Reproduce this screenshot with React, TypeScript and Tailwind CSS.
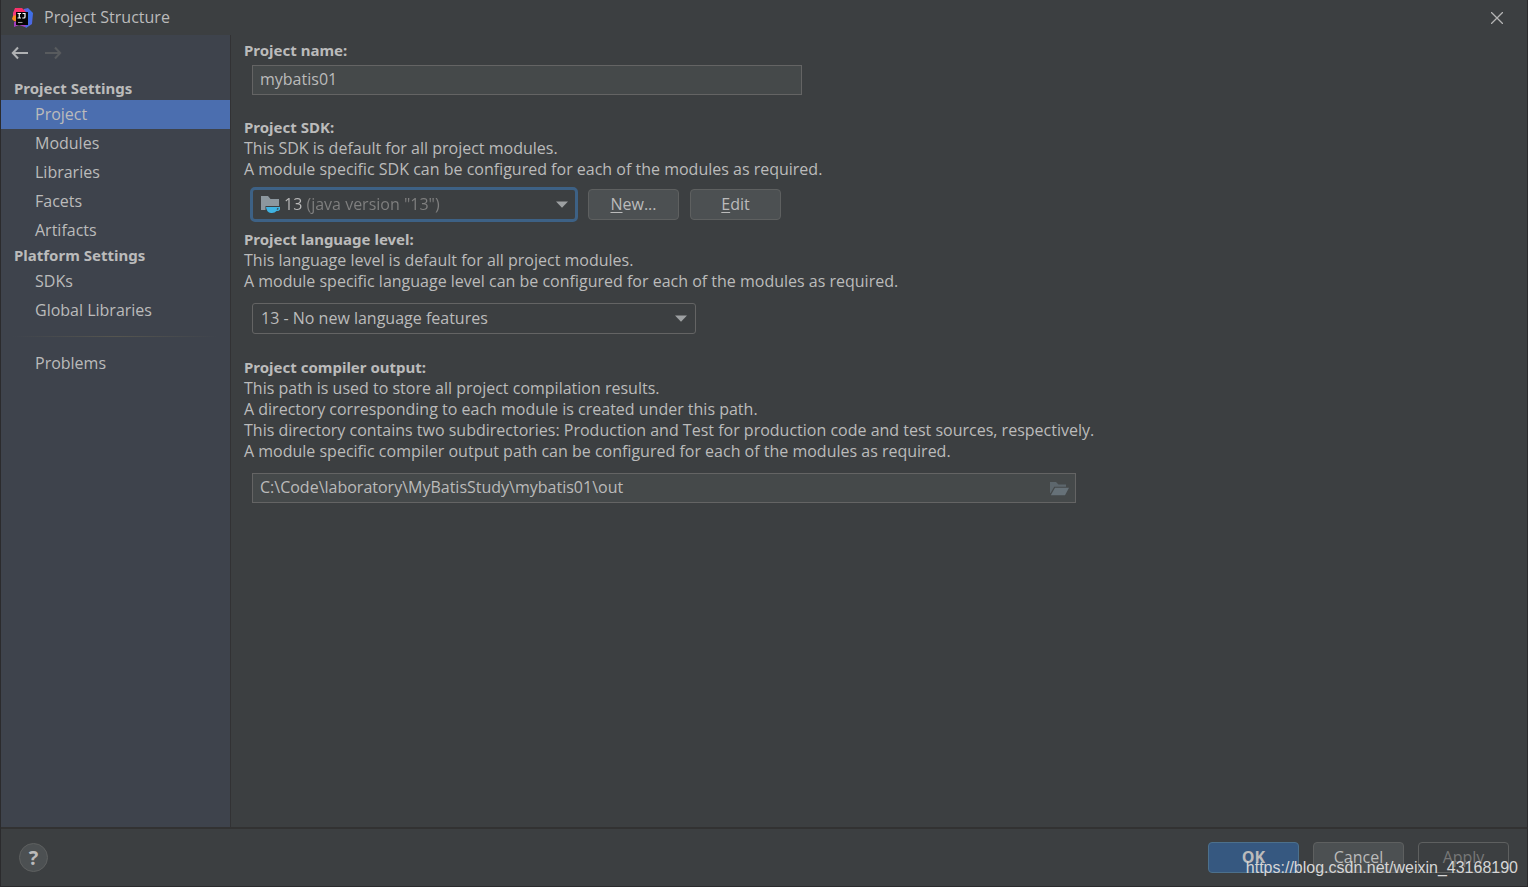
import { useState } from 'react';
import type { ReactNode } from 'react';

const projectItems = ['Project', 'Modules', 'Libraries', 'Facets', 'Artifacts'];
const platformItems = ['SDKs', 'Global Libraries'];

function AppLogo() {
  return (
    <svg width="22" height="22" viewBox="0 0 22 22" aria-hidden="true">
      <defs>
        <linearGradient id="logoBlue" x1="0" y1="0" x2="1" y2="1">
          <stop offset="0" stopColor="#7a5be0" />
          <stop offset="0.5" stopColor="#3a72e8" />
          <stop offset="1" stopColor="#5a62e0" />
        </linearGradient>
        <linearGradient id="logoRed" x1="0" y1="1" x2="1" y2="0">
          <stop offset="0" stopColor="#f0408a" />
          <stop offset="1" stopColor="#fe2857" />
        </linearGradient>
      </defs>
      <path d="M13 2 L17 1 L22 6 L21 17 L15 21 L10 14 Z" fill="url(#logoBlue)" />
      <path d="M4 1 L11 1 L15 5 L9 12 L2 12 L2 6 Z" fill="url(#logoRed)" />
      <path d="M2 9 L5 8 L6 15 L3 14 L1 12 Z" fill="#f98b1e" />
      <path d="M3 15 L6 14 L15 18 L14 20 L8 18 L3 20 Z" fill="#a63fc0" />
      <rect x="5" y="5" width="12" height="13" fill="#050505" />
      <path d="M6.5 6.5 H10 M8.25 6.5 V11 M6.5 11 H10 M11.5 6.5 H14 V10 Q14 11 13 11 H11.3" stroke="#fff" strokeWidth="1.2" fill="none" />
      <path d="M7 15.5 H11.5" stroke="#999" strokeWidth="1.1" />
    </svg>
  );
}

function Arrow({ flip = false }: { flip?: boolean }) {
  return (
    <svg width="18" height="14" viewBox="0 0 18 14" className={flip ? 'rotate-180' : ''} aria-hidden="true">
      <path d="M17 7 H2 M7 1.5 L1.8 7 L7 12.5" fill="none" stroke="currentColor" strokeWidth="2" />
    </svg>
  );
}

function SdkIcon() {
  return (
    <svg width="20" height="19" viewBox="0 0 20 19" aria-hidden="true">
      <path d="M0 1 H7 L9.5 4 H18 V11 H4.5 V15 H0 Z" fill="#8c979e" />
      <path d="M5 12 H19 V14.5 Q18.5 16 15.5 16 Q14 18 11 18 H10 Q5.5 17.5 5 12 Z" fill="#3fb3e2" />
      <path d="M16 13.3 H17.7 Q17.5 14.8 15.8 14.8 Z" fill="#3c3f41" />
    </svg>
  );
}

function FolderIcon() {
  return (
    <svg width="19" height="15" viewBox="0 0 19 15" aria-hidden="true">
      <path d="M0 1 H6 L8.5 3.5 H16 V5.7 H4.2 L0.6 12 H0 Z" fill="#5d676d" />
      <path d="M5 6.8 H19 L15 14.2 H0.8 Z" fill="#667178" />
    </svg>
  );
}

function Caret() {
  return (
    <svg width="12" height="7" viewBox="0 0 12 7" className="shrink-0" aria-hidden="true">
      <path d="M0 0.5 H12 L6 6.8 Z" fill="#9da0a2" />
    </svg>
  );
}

function NavItem({ label, active, onSelect }: { label: string; active: boolean; onSelect: (label: string) => void }) {
  return (
    <li>
      <button
        type="button"
        onClick={() => onSelect(label)}
        className={`flex h-[29px] w-full items-center pl-[34px] text-left ${active ? 'bg-[#4b6eaf]' : ''}`}
      >
        {label}
      </button>
    </li>
  );
}

const boldText = "font-['Noto_Sans',sans-serif] text-[15px] font-bold";

function NavHeading({ children }: { children: ReactNode }) {
  return <h2 className={`${boldText} h-[22px] pl-[13px] leading-[20px]`}>{children}</h2>;
}

const buttonBase = 'flex h-[31px] w-[91px] items-center justify-center rounded-[4px] border';

export default function App() {
  const [page, setPage] = useState('Project');
  return (
    <div className="relative flex min-h-screen flex-col border-x border-b border-[#2b2b2d] bg-[#3c3f41] font-['Open_Sans','Noto_Sans',sans-serif] text-[16px] leading-[21px] text-[#bbbbbb]">
      <header className="flex h-[35px] shrink-0 items-center pl-[10px] pr-6">
        <AppLogo />
        <h1 className="ml-[11px]">Project Structure</h1>
        <button type="button" aria-label="Close" className="ml-auto">
          <svg width="12" height="12" viewBox="0 0 12 12" aria-hidden="true">
            <path d="M0 0 L12 12 M12 0 L0 12" stroke="#b4b4b4" strokeWidth="1.3" />
          </svg>
        </button>
      </header>

      <div className="flex flex-1">
        <nav className="w-[230px] shrink-0 border-r border-[#323234] bg-[#3e434c]" aria-label="Sections">
          <div className="flex h-[43px] items-start gap-[15px] pl-[10px] pt-[11px]">
            <button type="button" aria-label="Back" className="text-[#afb1b3]">
              <Arrow />
            </button>
            <button type="button" aria-label="Forward" disabled className="text-[#585b5e]">
              <Arrow flip />
            </button>
          </div>
          <NavHeading>Project Settings</NavHeading>
          <ul>
            {projectItems.map((label) => (
              <NavItem key={label} label={label} active={page === label} onSelect={setPage} />
            ))}
          </ul>
          <NavHeading>Platform Settings</NavHeading>
          <ul>
            {platformItems.map((label) => (
              <NavItem key={label} label={label} active={page === label} onSelect={setPage} />
            ))}
          </ul>
          <div className="mx-3 mb-3 mt-[11px] h-px bg-linear-to-r from-transparent via-[#55554f] to-transparent" />
          <ul>
            <NavItem label="Problems" active={page === 'Problems'} onSelect={setPage} />
          </ul>
        </nav>

        <main className="flex min-w-0 flex-1 flex-col pl-[13px] pr-4 pt-[5px]">
          <label htmlFor="name" className={boldText}>Project name:</label>
          <input
            id="name"
            defaultValue="mybatis01"
            className="ml-2 mt-1 h-[30px] w-full max-w-[550px] border border-[#646464] bg-[#45494a] px-[7px] pb-[2px] outline-none"
          />

          <label htmlFor="sdk" className={`${boldText} mt-[22px]`}>Project SDK:</label>
          <p>This SDK is default for all project modules.</p>
          <p>A module specific SDK can be configured for each of the modules as required.</p>
          <div className="mt-[7px] flex items-center gap-[10px] pl-[6px]">
            <div className="flex h-[35px] w-[328px] items-center rounded-[5px] border-[3px] border-[#3d6185] pl-2 pr-[7px]">
              <SdkIcon />
              <select
                id="sdk"
                className="h-full min-w-0 flex-1 appearance-none bg-[linear-gradient(to_right,#bbbbbb_23px,#808080_23px)] bg-clip-text pl-[3px] text-transparent outline-none"
              >
                <option>13 (java version "13")</option>
              </select>
              <Caret />
            </div>
            <div className="flex gap-[11px]">
              <button type="button" className={`${buttonBase} border-[#5e6060] bg-[#4c5052]`}>
                <span className="underline underline-offset-2">N</span>ew...
              </button>
              <button type="button" className={`${buttonBase} border-[#5e6060] bg-[#4c5052]`}>
                <span className="underline underline-offset-2">E</span>dit
              </button>
            </div>
          </div>

          <label htmlFor="level" className={`${boldText} mt-[7px]`}>Project language level:</label>
          <p>This language level is default for all project modules.</p>
          <p>A module specific language level can be configured for each of the modules as required.</p>
          <div className="ml-2 mt-[11px] flex h-[31px] w-full max-w-[444px] items-center rounded-[3px] border border-[#646464] pr-2">
            <select id="level" className="h-full min-w-0 flex-1 appearance-none pl-2 outline-none">
              <option>13 - No new language features</option>
            </select>
            <Caret />
          </div>

          <label htmlFor="output" className={`${boldText} mt-[23px]`}>Project compiler output:</label>
          <p>This path is used to store all project compilation results.</p>
          <p>A directory corresponding to each module is created under this path.</p>
          <p>This directory contains two subdirectories: Production and Test for production code and test sources, respectively.</p>
          <p>A module specific compiler output path can be configured for each of the modules as required.</p>
          <div className="ml-2 mt-[11px] flex h-[30px] w-full max-w-[824px] items-center border border-[#646464] bg-[#45494a] pr-[6px]">
            <input
              id="output"
              defaultValue="C:\Code\laboratory\MyBatisStudy\mybatis01\out"
              className="h-full min-w-0 flex-1 bg-transparent pb-[2px] pl-[7px] outline-none"
            />
            <button type="button" aria-label="Browse">
              <FolderIcon />
            </button>
          </div>
        </main>
      </div>

      <footer className="flex h-[59px] shrink-0 items-center border-t-2 border-[#323232] pl-[18px] pr-[18px]">
        <button
          type="button"
          aria-label="Help"
          className="flex size-[29px] items-center justify-center rounded-full border border-[#5e6060] bg-[#4c5052] text-xl font-bold"
        >
          ?
        </button>
        <div className="ml-auto flex gap-[14px]">
          <button type="button" className={`${buttonBase} border-[#4c708c] bg-[#365880] font-bold`}>OK</button>
          <button type="button" className={`${buttonBase} border-[#5e6060] bg-[#4c5052]`}>Cancel</button>
          <button type="button" disabled className={`${buttonBase} border-[#5e6060] text-[#777777]`}>Apply</button>
        </div>
      </footer>

      <div className="pointer-events-none absolute bottom-[6px] right-[9px] font-['Liberation_Sans',sans-serif] text-base text-[#d6d6d6]">
        https://blog.csdn.net/weixin_43168190
      </div>
    </div>
  );
}
